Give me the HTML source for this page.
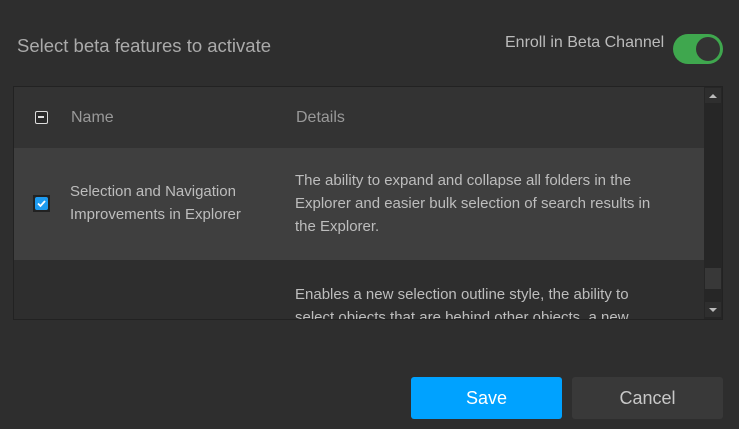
<!DOCTYPE html>
<html><head><meta charset="utf-8"><style>
*{margin:0;padding:0;box-sizing:border-box}
body{width:739px;height:429px;background:#2e2e2e;font-family:"Liberation Sans",sans-serif;color:#bdbdbd;position:relative;overflow:hidden;font-size:15px}
.abs{position:absolute}
.title{left:17px;top:35px;font-size:18.5px;color:#aaa}
.enroll{left:505px;top:34px;font-size:16px;color:#bbb}
.tog{left:673px;top:34px;width:50px;height:30px;border-radius:15px;background:#3fa74e}
.tog i{position:absolute;right:3px;top:3px;width:24px;height:24px;border-radius:12px;background:#333}
.tbl{left:13px;top:86px;width:710px;height:234px;border:1px solid #222;background:#2b2b2b;overflow:hidden}
.hdr{left:0;top:0;width:690px;height:61px;background:#333}
.sel{left:0;top:61px;width:690px;height:112px;background:#3f3f3f}
.r3{left:0;top:173px;width:690px;height:70px;background:#2e2e2e}
.t{line-height:23px}
.sb{left:690px;top:0;width:18px;height:232px;background:#262626}
.sbb{left:1px;width:16px;height:15px;background:#2e2e2e}
.thumb{left:1px;top:181px;width:16px;height:21px;background:#383838}
.cb{width:13px;height:13px;border-radius:2px}
.btn{top:377px;width:151px;height:42px;border-radius:3px;font-size:18px;text-align:center;line-height:42px}
</style></head><body>
<div class="abs title">Select beta features to activate</div>
<div class="abs enroll">Enroll in Beta Channel</div>
<div class="abs tog"><i></i></div>
<div class="abs tbl">
 <div class="abs hdr"></div>
 <div class="abs sel"></div>
 <div class="abs r3"></div>
 <div class="abs cb" style="left:21px;top:24px;border:1.5px solid #ddd;background:#2a2a2a"><div style="position:absolute;left:2px;top:4px;width:6px;height:1.5px;background:#ddd"></div></div>
 <div class="abs t" style="left:57px;top:19px;color:#999;font-size:16px">Name</div>
 <div class="abs t" style="left:282px;top:19px;color:#999;font-size:16px">Details</div>
 <div class="abs" style="left:19px;top:108px;width:17px;height:17px;background:#222"></div>
 <div class="abs cb" style="left:21px;top:110px;background:#1e9bf0"><svg width="13" height="13" style="position:absolute;left:0;top:0"><path d="M3 6.5l2.5 2.5 4.5-5" stroke="#fff" stroke-width="1.8" fill="none"/></svg></div>
 <div class="abs t" style="left:56px;top:93px">Selection and Navigation<br>Improvements in Explorer</div>
 <div class="abs t" style="left:281px;top:82px">The ability to expand and collapse all folders in the<br>Explorer and easier bulk selection of search results in<br>the Explorer.</div>
 <div class="abs t" style="left:281px;top:196px">Enables a new selection outline style, the ability to<br>select objects that are behind other objects, a new</div>
 <div class="abs sb">
  <div class="abs sbb" style="top:1px"><svg width="16" height="15"><path d="M4 10l4-4 4 4z" fill="#bbb"/></svg></div>
  <div class="abs thumb"></div>
  <div class="abs sbb" style="top:215px"><svg width="16" height="15"><path d="M4 6l4 4 4-4z" fill="#bbb"/></svg></div>
 </div>
</div>
<div class="abs btn" style="left:411px;background:#00a2ff;color:#fff">Save</div>
<div class="abs btn" style="left:572px;background:#393939;color:#c8c8c8">Cancel</div>
</body></html>
